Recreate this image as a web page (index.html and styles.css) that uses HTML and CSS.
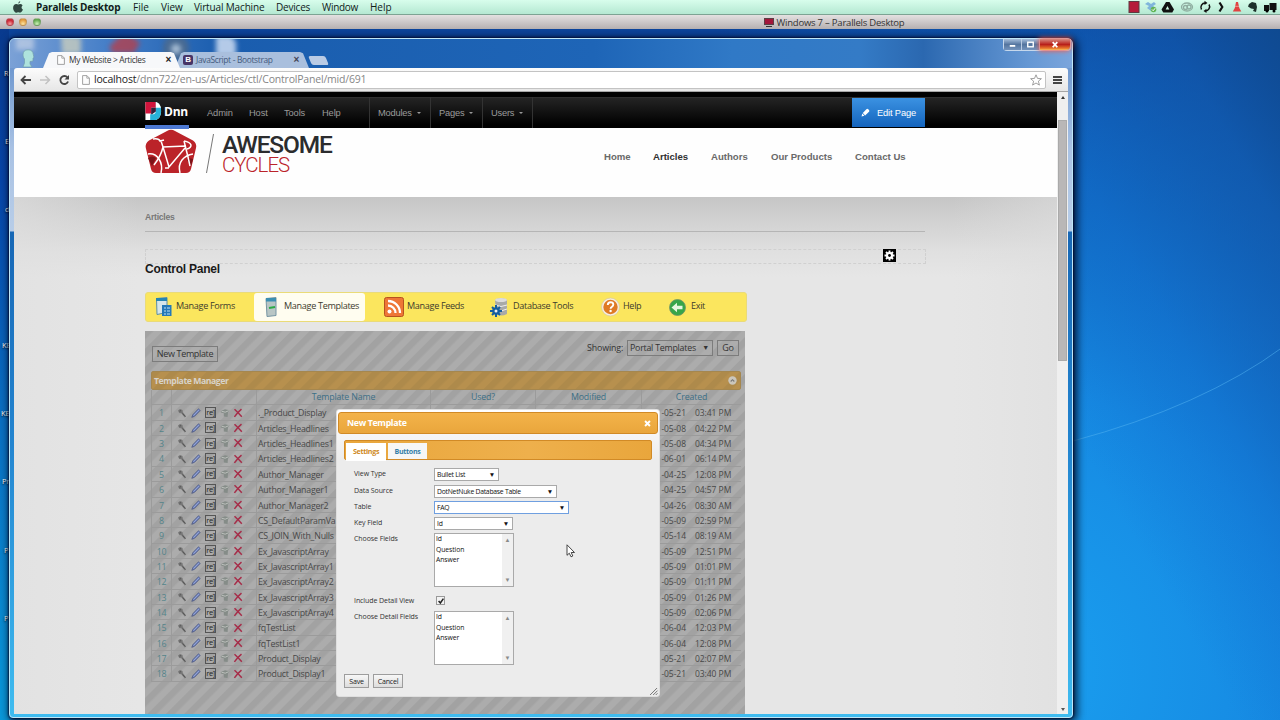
FILE: index.html
```html
<!DOCTYPE html>
<html lang="en">
<head>
<meta charset="utf-8">
<title>Control Panel</title>
<link rel="stylesheet" href="styles.css">
</head>
<body>
<svg class="defs" aria-hidden="true">
  <symbol id="wrench" viewBox="0 0 10 10"><path d="M1 2.500L3 1l2.500 1 .3 2L9 8.200 7.800 9.400 4.300 5.200 2.200 5Z" fill="#777"/><path d="M2.500 3.200l1.500-.6M5.500 5.500l2.800 3" stroke="#555" stroke-width="1"/></symbol>
  <symbol id="pencil" viewBox="0 0 10 10"><path d="M.8 9.300L2 6.500 7.500.8 9.200 2.400 3.500 8.300Z" fill="#7487c0" stroke="#4a5680" stroke-width=".8"/><path d="M2.500 7.500L8.200 1.700" stroke="#93a4d6"/></symbol>
  <symbol id="crate" viewBox="0 0 10 10"><path d="M.8 3L5 1.200 9.500 2.300 8 4.500 7.600 9 3.800 8.600 3.800 5.200.8 4.500Z" fill="#858c88"/><path d="M1.500 3.200l3.700 1 3.500-1.500" stroke="#bcc0bc" fill="none"/></symbol>
  <symbol id="cross" viewBox="0 0 10 10"><path d="M1.500 1.300Q5 4.500 8.800 8.700M8.500 1.200Q4.500 4.500 1.400 8.900" stroke="#a62d49" stroke-width="1.500" fill="none"/></symbol>
  <symbol id="page" viewBox="0 0 8 10"><path d="M.6.6h4.300l2.500 2.500v6.300H.6Z" fill="#fdfdfd" stroke="#999" stroke-width=".9"/><path d="M4.800.6v2.600h2.600" fill="none" stroke="#999" stroke-width=".8"/></symbol>
</svg>

<header class="menubar">
  <svg class="apple" viewBox="0 0 12 12"><path d="M8.300 0Q6.200.6 6.200 2.700 8.200 2.400 8.300 0Z" fill="#344b45"/><path d="M6.200 3.400Q3.800 2.300 2 3.900 0 7 2.400 10.500 3.700 12.200 5 11.500 6.300 10.900 7.600 11.600 9.200 12 11 8.700 8.300 6.900 10.600 4.200 9 2.300 6.200 3.400Z" fill="#304740"/></svg>
  <b class="m1">Parallels Desktop</b><span class="m2">File</span><span class="m3">View</span><span class="m4">Virtual Machine</span><span class="m5">Devices</span><span class="m6">Window</span><span class="m7">Help</span>
  <svg class="tray" viewBox="0 0 152 14">
    <rect x="1" y="1.500" width="10" height="11" fill="#b51d3b" stroke="#5e3a42"/>
    <path d="M17 4l3-2 3 2 3-2 2 2-3 2 2 2-4 3-4-3 2-2Z" fill="#7fb5dc"/><circle cx="25.500" cy="9.500" r="2.800" fill="#62b558"/><path d="M24 9.500l1.200 1.200 2-2.500" stroke="#fff" fill="none"/>
    <path d="M38 2h3.500l4.500 7.500-1.700 3h-9L33.500 9.500Z" fill="#111"/><path d="M39.500 6l1.800 3.500h-3.600Z" fill="#cff7e2"/>
    <g fill="none" stroke="#8fada0" stroke-width="1.300"><ellipse cx="59" cy="7" rx="5.500" ry="4"/><circle cx="57.500" cy="7.500" r="2"/><circle cx="61" cy="7" r="2"/></g>
    <path d="M73.500 9.500a4.300 4.300 0 0 1 4-6.500M81 4.500a4.300 4.300 0 0 1-4 6.500" fill="none" stroke="#111" stroke-width="1.500"/><path d="M76.500.8l3 2.300-3 2ZM78.500 8.800v4.200l-3-2Z" fill="#111"/>
    <path d="M91.500 2.500l2.800 4.500-2.800 4.500" fill="none" stroke="#111" stroke-width="2.200"/>
    <path d="M108 2h2l1.300 6 2 3.500h-8.500l2-3.500Z" fill="#e04342"/><path d="M107 6.300h4" stroke="#ef9b93"/>
    <path d="M121 4l3-2 4 1 1 4-1 5-3-1 1-2-3-.5-3-2Z" fill="#1d302b"/>
    <path d="M136 5h5v6h-5ZM141.500 3h7v7h-7Z" fill="#111"/><circle cx="139" cy="11" r="1.500"/><circle cx="146" cy="11" r="1.500"/>
  </svg>
</header>

<div class="vmbar">
  <i class="light red"></i><i class="light amber"></i><i class="light green"></i>
  <svg class="vmicon" viewBox="0 0 10 9"><rect x=".5" y=".5" width="9" height="6" fill="#a2163a" stroke="#5b4046"/><path d="M2 8.500h6" stroke="#333"/></svg>
  <span>Windows 7 – Parallels Desktop</span>
</div>

<main class="desktop">
  <svg class="arc" viewBox="0 0 210 110"><path d="M0 94Q130 59 210 0" fill="none" stroke="#56b5f2" stroke-width="1" opacity=".5"/></svg>
  <span class="lbl" style="top:39px;left:4px">R</span><span class="lbl" style="top:107px;left:5px">E</span><span class="lbl" style="top:175px;left:5px">d</span><span class="lbl" style="top:311px;left:2px">KE</span><span class="lbl" style="top:379px;left:1px">KB</span><span class="lbl" style="top:447px;left:2px">Pr</span><span class="lbl" style="top:516px;left:4px">P</span><span class="lbl" style="top:584px;left:4px">P</span>

  <section class="window">
    <div class="glass">
      <svg class="blobs" viewBox="0 0 340 30"><g><rect x="6" y="-2" width="18" height="13" fill="#d3dcea" opacity=".7"/><path d="M51-4l20 2v17H52Z" fill="#ddd9bb" opacity=".8"/><path d="M115-8l15 12-6 10h-21l-4-6Z" fill="#c13a3f" opacity=".85"/><circle cx="166" cy="9" r="13" fill="#4d6a8c"/><circle cx="166" cy="10" r="5" fill="#bccbd9"/><path d="M206-3h15l5 6v14h-20Z" fill="#cfdef3"/></g></svg>
      <svg class="head" viewBox="0 0 14 18"><path d="M2 6Q2 .8 7 .8 12 .8 12.300 5.500L13 8.500 12 9v3L9 12.500V15l2 3H2l1.500-4V10Q2 8.500 2 6Z" fill="#aee2dd" stroke="#719cae" stroke-width=".7"/></svg>
      <div class="tab on"><svg class="ic"><use href="#page"/></svg><span>My Website &gt; Articles</span><em>×</em></div>
      <div class="tab off"><i class="bs">B</i><span>JavaScript - Bootstrap</span><em>×</em></div>
      <i class="newtab"></i>
      <div class="winbtns">
        <span><svg viewBox="0 0 18 12"><path d="M6 7.500h6" stroke="#fff" stroke-width="2"/></svg></span><span><svg viewBox="0 0 18 12"><rect x="6" y="3.500" width="6" height="5" fill="none" stroke="#fff" stroke-width="1.500"/></svg></span><span class="close"><svg viewBox="0 0 30 12"><path d="M12.500 3.500l5 5.500M17.500 3.500l-5 5.500" stroke="#fff" stroke-width="2"/></svg></span>
      </div>
    </div>
    <div class="toolbar">
      <svg class="nav" viewBox="0 0 60 22"><path d="M7.500 11H17M11.500 7l-4 4 4 4" fill="none" stroke="#444" stroke-width="1.800"/><path d="M26 11h9.500M31.500 7l4 4-4 4" fill="none" stroke="#c2c2c2" stroke-width="1.500"/><path d="M53.500 8.500a4 4 0 1 0 .6 4" fill="none" stroke="#444" stroke-width="1.800"/><path d="M55 6v4.500h-4.500Z" fill="#444"/></svg>
      <div class="omni"><svg class="ic"><use href="#page"/></svg><span class="url"><b>localhost</b>/dnn722/en-us/Articles/ctl/ControlPanel/mid/691</span><svg class="star" viewBox="0 0 12 12"><path d="M6 .8l1.500 3.600 3.900.3-3 2.500 1 3.900L6 9l-3.400 2.100 1-3.900-3-2.500 3.900-.3Z" fill="#fff" stroke="#888" stroke-width=".8"/></svg></div>
      <i class="burger"></i>
    </div>
    <div class="viewport">
      <div class="page">
        <div class="dnnbar">
          <svg class="dnn" viewBox="0 0 17 20"><path d="M0 0h11q5.500 2 5.500 9.500Q16.500 17 11 19H0Z" fill="#fff"/><path d="M0 0h11v6H6v6H0Z" fill="#d2143c"/><path d="M11 6V0q5.500 2 5.500 9.500Q16.500 17 11 19H5v-6h4q2-1 2-4Z" fill="#27b3d8"/><path d="M11 0q4 1 5.300 6H11Z" fill="#fff"/><path d="M6 6h5v4l-4 3H6Z" fill="#33203a"/></svg>
          <b class="dnntext">Dnn</b>
          <span class="a1">Admin</span><span class="a2">Host</span><span class="a3">Tools</span><span class="a4">Help</span>
          <span class="drop d1">Modules<i></i></span><span class="drop d2">Pages<i></i></span><span class="drop d3">Users<i></i></span><i class="dropend"></i>
          <div class="edit"><svg viewBox="0 0 10 10"><path d="M.6 9.400L1.400 6.200 3.800 8.600ZM2 5.500L6 1.300q1-.8 2 0l.9.9q.8 1 0 2L4.600 8.200Z" fill="#fff"/></svg><span>Edit Page</span></div>
        </div>
        <div class="sitehead">
          <svg class="bike" viewBox="0 0 52 46"><path d="M22 2Q26-.5 30 2L48 11.500Q52 14 51 19L46 40Q45 44 41 44H11Q7 44 6 40L.8 19Q0 14 4 11.500Z" fill="#bb2329"/><path d="M3 29q4-3 8 0l-4 8M48 30q-5-2-6 1l4 6" fill="#7d1319"/><g fill="none" stroke="#fff" stroke-width="1.500"><path d="M3 25q7-1 11 5 4 6 2 14M35 44q-2-8 2-13 4-5 11-6"/><path d="M8 10q6-1 7 2l4-1M16 12l2 6 23-1M18 18q-2 9-9 18M18 18l6 20 16-19M24 39h-4M39 12q6 1 7 4 0 3-4 4M39 12l4 16 2 9"/></g></svg>
          <svg class="slash" viewBox="0 0 10 40"><path d="M7.500 0L.5 39" stroke="#777" stroke-width="1"/></svg>
          <div class="brand"><b>AWESOME</b><span>CYCLES</span></div>
          <nav><span class="n1">Home</span><span class="n2">Articles</span><span class="n3">Authors</span><span class="n4">Our Products</span><span class="n5">Contact Us</span></nav>
        </div>
        <div class="content">
          <div class="crumb">Articles</div>
          <div class="dash"><i class="gear"><svg viewBox="0 0 13 13"><path d="M6.500 1.500v10M1.500 6.500h10M3 3l7 7M10 3L3 10" stroke="#fff" stroke-width="1.900"/><circle cx="6.500" cy="6.500" r="3.500" fill="#fff"/><circle cx="6.500" cy="6.500" r="1.400" fill="#000"/></svg></i></div>
          <h1>Control Panel</h1>
          <div class="yellow">
            <div class="y1"><svg viewBox="0 0 16 20"><path d="M.5 1.500L11 .5v15L1 17.500Z" fill="#d6e6ea" stroke="#5a8da5"/><path d="M0 1h11v3H0Z" fill="#2685b4"/><rect x="6" y="8" width="9.500" height="11" fill="#2479b8"/><path d="M8 11h2m1 0h3M8 14h2m1 0h3M8 17h2m1 0h3" stroke="#bde0f5"/></svg><span>Manage Forms</span></div>
            <div class="y2"><svg viewBox="0 0 16 20"><path d="M3 1.500L13 .5v18L4 19.500Z" fill="#b9c6c5" stroke="#7695a3"/><path d="M3 1h10v3.500H3Z" fill="#3b8fb2"/><path d="M6 11l6-1" stroke="#2bab45" stroke-width="2"/></svg><span>Manage Templates</span></div>
            <div class="y3"><svg viewBox="0 0 20 20"><rect x=".5" y=".5" width="19" height="19" rx="2" fill="#ee7636" stroke="#b65220"/><circle cx="5.500" cy="14.500" r="2" fill="#fff"/><path d="M4 8.500a7.500 7.500 0 0 1 7.500 7.500M4 4a12 12 0 0 1 12 12" fill="none" stroke="#fff" stroke-width="2.300"/></svg><span>Manage Feeds</span></div>
            <div class="y4"><svg viewBox="0 0 18 20"><path d="M5 3q6-4 12 0v14q-6 3-11 0Z" fill="#a9aaa8"/><ellipse cx="11" cy="3" rx="6" ry="2" fill="#ddd"/><path d="M5 8q6 3 12 0M6 13q6 2 11-1" stroke="#eee" fill="none"/><path d="M6 8v12M0 14h12M2 10l8 8M10 10l-8 8" stroke="#155ea0" stroke-width="2"/><circle cx="6" cy="14" r="3.800" fill="#155ea0"/><circle cx="6" cy="14" r="1.500" fill="#eee"/></svg><span>Database Tools</span></div>
            <div class="y5"><svg viewBox="0 0 19 20"><circle cx="9.500" cy="10" r="9" fill="#f5eee0" stroke="#d9c8a0" stroke-width=".7"/><circle cx="9.500" cy="10" r="7.200" fill="#df7a25"/><path d="M6.800 8q0-2.800 2.800-2.800 2.700 0 2.700 2.400 0 1.400-1.500 2.200-1.200.6-1.200 2" fill="none" stroke="#fff" stroke-width="1.900"/><circle cx="9.600" cy="14" r="1.200" fill="#fff"/></svg><span>Help</span></div>
            <div class="y6"><svg viewBox="0 0 17 20"><circle cx="8.500" cy="10.500" r="8" fill="#37a649" stroke="#6f9268" stroke-width=".8"/><path d="M2.500 10.500l5.500-4.800v3h5.500v3.600H8v3Z" fill="#e6f7df"/></svg><span>Exit</span></div>
          </div>
          <div class="panel">
            <div class="ptop"><span class="btn nt">New Template</span><span class="show">Showing:</span><span class="btn sel">Portal Templates<i>▼</i></span><span class="btn go">Go</span></div>
            <div class="tmbar"><b>Template Manager</b><svg viewBox="0 0 9 9"><circle cx="4.500" cy="4.500" r="4.200" fill="#cbc6bc"/><path d="M2.700 5.500l1.800-1.800 1.800 1.800" fill="none" stroke="#777" stroke-width="1.100"/></svg></div>
            <div class="grid hd"><span></span><span></span><span>Template Name</span><span>Used?</span><span>Modified</span><span>Created</span></div>
            <div id="rows"></div>

            <div class="dialog">
              <div class="dtitle"><b>New Template</b><svg viewBox="0 0 8 8"><path d="M1.200 1.200l5.600 5.600M6.800 1.200L1.200 6.800" stroke="#fff" stroke-width="2.200"/></svg></div>
              <div class="tabs"><b class="t1">Settings</b><b class="t2">Buttons</b></div>
              <div class="form">
                <div class="fr f1"><label>View Type</label><span class="select s1">Bullet List<i>▼</i></span></div>
                <div class="fr f2"><label>Data Source</label><span class="select s2">DotNetNuke Database Table<i>▼</i></span></div>
                <div class="fr f3"><label>Table</label><span class="select s3">FAQ<i>▼</i></span></div>
                <div class="fr f4"><label>Key Field</label><span class="select s4">Id<i>▼</i></span></div>
                <div class="fr f5"><label>Choose Fields</label><div class="list"><p>Id<br>Question<br>Answer</p><div><i>▲</i><i>▼</i></div></div></div>
                <div class="fr f6"><label>Include Detail View</label><i class="check"><svg viewBox="0 0 9 9"><path d="M1.800 4.500l2 2.300 3.400-5" fill="none" stroke="#222" stroke-width="1.700"/></svg></i></div>
                <div class="fr f7"><label>Choose Detail Fields</label><div class="list"><p>Id<br>Question<br>Answer</p><div><i>▲</i><i>▼</i></div></div></div>
              </div>
              <div class="acts"><span>Save</span><span>Cancel</span></div>
              <svg class="grip" viewBox="0 0 9 8"><path d="M0 8L8 0M3.500 8L8.500 3M6.500 8l2-2" stroke="#555" stroke-width=".9"/></svg>
            </div>
          </div>
        </div>
      </div>
      <div class="scroll"><i class="up"></i><i class="thumb"></i><i class="down"></i></div>
    </div>
  </section>
  <svg class="cursor" viewBox="0 0 10 14"><path d="M1 .8v10.500l2.300-2.100L5 12.800l1.800-.8-1.600-3.500h3.300Z" fill="#fff" stroke="#333" stroke-width=".9"/></svg>
</main>
<script src="rows.js"></script>
</body>
</html>
```
FILE: rows.js
```js
const templates = [
  ["._Product_Display", "05-21", "03:41 PM"],
  ["Articles_Headlines", "05-08", "04:22 PM"],
  ["Articles_Headlines1", "05-08", "04:34 PM"],
  ["Articles_Headlines2", "06-01", "06:14 PM"],
  ["Author_Manager", "04-25", "12:08 PM"],
  ["Author_Manager1", "04-25", "04:57 PM"],
  ["Author_Manager2", "04-26", "08:30 AM"],
  ["CS_DefaultParamVa", "05-09", "02:59 PM"],
  ["CS_JOIN_With_Nulls", "05-14", "08:19 AM"],
  ["Ex_JavascriptArray", "05-09", "12:51 PM"],
  ["Ex_JavascriptArray1", "05-09", "01:01 PM"],
  ["Ex_JavascriptArray2", "05-09", "01:11 PM"],
  ["Ex_JavascriptArray3", "05-09", "01:26 PM"],
  ["Ex_JavascriptArray4", "05-09", "02:06 PM"],
  ["fqTestList", "06-04", "12:03 PM"],
  ["fqTestList1", "06-04", "12:08 PM"],
  ["Product_Display", "05-21", "02:07 PM"],
  ["Product_Display1", "05-21", "03:40 PM"]
];
const icon = name => `<svg class="${name}"><use href="#${name}"/></svg>`;
document.getElementById("rows").innerHTML = templates.map(([name, date, time], i) =>
  `<div class="grid row"><span class="num">${i + 1}</span>` +
  `<span class="tools">${icon("wrench")}${icon("pencil")}<i class="re">re]</i>${icon("crate")}${icon("cross")}</span>` +
  `<span class="name">${name}</span><span class="used">${i ? "" : "0"}</span><span></span>` +
  `<span class="when"><u>-${date}</u><u>${time}</u></span></div>`).join("");
```
FILE: styles.css
```css
* { box-sizing: border-box; }
body { margin: 0; width: 1280px; height: 720px; overflow: hidden; display: flex; flex-direction: column; font-family: "Open Sans", sans-serif; font-size: 9px; color: #222; }
i, u { font-style: normal; text-decoration: none; }
svg { display: block; flex: none; overflow: visible; }
span, b, label { white-space: nowrap; }
.defs { display: none; }

.menubar { height: 15px; flex: none; display: flex; align-items: center; background: linear-gradient(#d8fdec, #b5e8d2); border-bottom: 1px solid #7da393; font-size: 10px; color: #10201a; }
.apple { width: 12px; height: 12px; margin-left: 12px; }
.m1 { margin-left: 12px; width: 97px; letter-spacing: -.15px; }
.m2 { width: 28px; } .m3 { width: 33px; } .m4 { width: 82px; letter-spacing: -.15px; } .m5 { width: 46px; letter-spacing: -.2px; } .m6 { width: 48px; letter-spacing: -.3px; } .m7 { width: 30px; }
.tray { width: 152px; height: 14px; margin-left: auto; }

.vmbar { height: 14px; flex: none; display: flex; align-items: center; background: linear-gradient(#e4e1e1, #b5b0b1); font-size: 9.500px; letter-spacing: -.22px; color: #333; }
.light { width: 8px; height: 8px; border-radius: 50%; margin-left: 5.500px; border: 1px solid #7775; }
.red { background: radial-gradient(circle at 50% 80%, #f5a0a0, #cf2b3a 60%); } .amber { background: radial-gradient(circle at 50% 80%, #fbe3a0, #e39a3b 70%); } .green { background: radial-gradient(circle at 50% 80%, #cdf1b8, #62aa4e 70%); }
.vmicon { width: 10px; height: 9px; margin-left: 723px; margin-right: 3px; }

.desktop { position: relative; flex: 1; overflow: hidden; background: radial-gradient(ellipse 700px 700px at 1010px 640px, #1aa0f0 0, #1689e2 40%, #1168c0 75%, transparent 100%), linear-gradient(#0c449c 0, #0c50a8 20%, #0d66c4 48%, #0c90dc 100%); }
.desktop::before { content: ""; position: absolute; left: 1050px; right: 0; top: 0; bottom: 0; background: linear-gradient(240deg, #0f4a91 0, #1155a8aa 18%, #0f60c255 45%, transparent 70%); }
.desktop::after { content: ""; position: absolute; left: 0; top: 0; width: 9px; height: 691px; background: linear-gradient(#093a8e, #0745a8 22%, #0a6ec2 55%, #0998da 100%); z-index: 0; }
.arc { position: absolute; left: 1073px; top: 318px; width: 210px; height: 110px; }
.lbl { position: absolute; z-index: 1; font-size: 7.500px; color: #fff; line-height: 10px; text-shadow: 0 1px 2px #000; }

.window { position: absolute; z-index: 2; left: 9px; top: 9px; width: 1064px; height: 680px; padding: 0 4px 3px; border: 1px solid #bfe6f7; border-radius: 6px 6px 4px 4px; box-shadow: 0 0 2px 1px #002a, 2px 2px 8px 2px #001c; background: linear-gradient(#6f9bd4 0, #6f98cf 28px, #a9c2e4 110px, #b8cde8 192px, #1767b5 193px, #2385d0 60%, #3fbcf0 100%); display: flex; flex-direction: column; }
.glass { position: relative; height: 29px; flex: none; margin: 0 -4px; padding-left: 11px; display: flex; align-items: flex-end; border-radius: 5px 5px 0 0; background: linear-gradient(90deg, #7ba1d6 0, #467fc8 9%, #1a5dae 20%, #1e65b7 55%, #3079c6 68%, #347bc6 80%, #2b68b0 86%, #6698d4 96%, #7ba5dc); }
.blobs { position: absolute; left: 0; top: 0; width: 340px; height: 30px; filter: blur(2.500px); clip-path: inset(0 0 0 0); opacity: .85; }
.head { position: relative; width: 14px; height: 18px; margin-bottom: 1px; }
.tab { position: relative; display: flex; align-items: center; height: 16px; font-size: 8.400px; color: #333; letter-spacing: -.32px; }
.tab::before { content: ""; position: absolute; inset: 0; background: #f7f8fa; clip-path: polygon(0 100%, 6px 8%, 9px 0, calc(100% - 9px) 0, calc(100% - 6px) 8%, 100% 100%); }
.tab > * { position: relative; }
.tab span { flex: 1; margin-top: -1px; }
.tab em { font: bold 10px/12px "Liberation Sans", sans-serif; margin-right: 9px; color: #222; }
.tab .ic { width: 8px; height: 10px; margin-right: 4px; }
.on { width: 137px; margin-left: 8px; padding-left: 14px; z-index: 1; }
.off { width: 134px; margin-left: -5px; padding-left: 8px; color: #445a7c; }
.off::before { background: #a9bfdd; }
.off em { color: #445; margin-right: 10px; }
.bs { width: 10px; height: 10px; margin-right: 3px; border-radius: 2px; background: #473466; color: #fff; font: bold 8px/10px "Liberation Sans", sans-serif; text-align: center; }
.newtab { position: relative; width: 17px; height: 9px; margin: 0 0 3px 1px; background: #b9cbe5; transform: skewX(22deg); border-radius: 2px; }
.winbtns { position: relative; align-self: flex-start; margin-left: auto; margin-right: 1px; display: flex; height: 12px; border: 1px solid #c6d8ec; border-top: 0; border-radius: 0 0 4px 4px; }
.winbtns span { width: 18px; background: linear-gradient(#a5bedc, #54759f 50%, #7494bd); border-right: 1px solid #b8cbe2; }
.winbtns span svg { width: 100%; height: 11px; }
.winbtns .close { width: 30px; border: 0; border-radius: 0 0 4px 0; background: linear-gradient(#d78b80, #b8201b 50%, #e9782c 85%, #f5c060); box-shadow: 0 0 5px 1px #f75b4a; }

.toolbar { height: 24px; flex: none; display: flex; align-items: center; padding-right: 6px; background: linear-gradient(#fcfcfc, #e6e6e6); border-radius: 3px 3px 0 0; border-bottom: 1px solid #a5a5a5; }
.nav { width: 60px; height: 22px; }
.omni { height: 18px; width: 969px; margin-left: 3px; display: flex; align-items: center; padding: 0 3px 0 4px; background: #fff; border: 1px solid #c3c3c3; border-radius: 2px; }
.omni .ic { width: 8px; height: 10px; margin-right: 4px; }
.url { flex: 1; font-size: 10.500px; color: #868686; letter-spacing: -.19px; margin-top: -1px; }
.url b { font-weight: 400; color: #222; }
.star { width: 12px; height: 12px; }
.burger { width: 9px; height: 8px; margin-left: auto; border-top: 2px solid #444; border-bottom: 2px solid #444; background: linear-gradient(transparent 1px, #444 1px, #444 3px, transparent 3px); }

.viewport { flex: 1; display: flex; min-height: 0; }
.page { width: 1043px; display: flex; flex-direction: column; overflow: hidden; }
.dnnbar { height: 36px; flex: none; padding: 5px 0 0 131px; display: flex; align-items: center; background: linear-gradient(#000 5px, #3a3a3a 5px, #242424 6px, #000 33px); font-family: "Liberation Sans", sans-serif; font-size: 9.300px; color: #9b9b9b; }
.dnn { width: 17px; height: 19px; margin-top: -3px; }
.dnntext { width: 45px; margin: -2px 0 0 2px; font: bold 12px/12px "Open Sans", sans-serif; color: #fff; letter-spacing: -.2px; }
.dnnbar::after { content: ""; position: absolute; left: 135px; top: 86px; width: 44px; height: 4px; background: #4c78d2; }
.a1 { width: 42px; margin-left: -2px; } .a2 { width: 35px; } .a3 { width: 38px; } .a4 { width: 47px; }
.a1, .a2, .a3, .a4 { letter-spacing: -.12px; }
.drop { align-self: stretch; display: flex; align-items: center; padding-left: 8px; border-left: 1px solid #333; letter-spacing: -.2px; }
.drop i { margin-left: 5px; border: 2.500px solid transparent; border-top-color: #999; margin-top: 3px; }
.d1 { width: 61px; } .d2 { width: 52px; } .d3 { width: 50px; } .dropend { width: 1px; align-self: stretch; background: #333; }
.edit { width: 73px; height: 29px; margin-left: 319px; display: flex; align-items: center; padding-left: 9px; gap: 7px; background: linear-gradient(#3b92e2, #1464bd); color: #fff; font-size: 9.300px; letter-spacing: -.15px; }
.edit svg { width: 9px; height: 9px; }

.sitehead { height: 69px; flex: none; display: flex; align-items: flex-start; padding-left: 131px; background: #fefefe; }
.bike { width: 52px; height: 46px; margin-top: 1px; }
.slash { width: 10px; height: 40px; margin: 6px 0 0 9px; }
.brand { margin: 2px 0 0 6px; width: 112px; display: flex; flex-direction: column; font-family: Roboto, sans-serif; }
.brand b { font-size: 24.500px; line-height: 29px; letter-spacing: -1.200px; color: #2b2c2e; font-weight: 500; }
.brand span { font-size: 20.500px; line-height: 24px; margin-top: -7px; letter-spacing: -1px; color: #bb2329; font-weight: 300; margin-top: -6px; }
nav { display: flex; margin: 22px 0 0 270px; font: bold 9.600px/14px "Liberation Sans", sans-serif; color: #696969; }
.n1 { width: 49px; } .n2 { width: 58px; color: #303030; } .n3 { width: 60px; } .n4 { width: 84px; }

.content { position: relative; flex: 1; min-height: 0; padding: 13px 0 0 131px; background: linear-gradient(90deg, #e0e0e0a0, transparent 12%, transparent 90%, #dedede90), linear-gradient(#c6c6c6, #d2d2d2 25px, #e0e0e0 55px, #e6e6e6 80px, #e6e6e6); }
.crumb { width: 780px; height: 22px; border-bottom: 1px solid #b5b5b5; font: bold 8.600px/14px "Liberation Sans", sans-serif; letter-spacing: -.25px; color: #777; }
.dash { width: 781px; height: 15px; margin-top: 17px; border: 1px dashed #d0d0d0; padding-left: 737px; }
.gear { display: block; width: 13px; height: 13px; margin-top: -1px; background: #000; }
h1 { margin: -2px 0 0; font: bold 12px/15px "Liberation Sans", sans-serif; letter-spacing: -.25px; color: #1a1a1a; }
.yellow { width: 602px; height: 30px; margin-top: 15px; display: flex; border: 1px solid #eadb78; border-radius: 3px; background: #fbe65e; font-size: 9.100px; letter-spacing: -.33px; color: #3c3a2c; }
.yellow div { display: flex; align-items: center; }
.yellow span { margin-top: -4px; }
.yellow svg { height: 20px; margin-top: -1px; }
.y1 { width: 108px; padding-left: 10px; gap: 4px; } .y2 { width: 111px; padding-left: 9px; gap: 5px; background: #fffdf0; border-radius: 3px; } .y3 { width: 124px; padding-left: 19px; gap: 3px; } .y4 { width: 112px; padding-left: 1px; gap: 5px; } .y5 { width: 68px; gap: 3px; } .y6 { gap: 5px; }
.y1 svg, .y2 svg { width: 16px; } .y3 svg { width: 20px; } .y4 svg { width: 18px; } .y5 svg { width: 19px; } .y6 svg { width: 17px; }

.panel { position: relative; width: 600px; height: 384px; margin-top: 9px; padding: 0 4px 0 6px; background: repeating-linear-gradient(135deg, #a2a2a2 0 5px, #acacac 7px 12px, #a2a2a2 13px); }
.ptop { height: 40px; display: flex; align-items: flex-start; padding-left: 1px; color: #333; font-size: 9px; letter-spacing: -.35px; }
.btn { border: 1px solid #7c7c7c; height: 16px; line-height: 14px; text-align: center; background: #b0b0b055; }
.nt { width: 66px; margin-top: 15px; }
.show { width: 40px; margin: 10px 0 0 369px; line-height: 14px; font-size: 8.800px; letter-spacing: -.1px; }
.sel { width: 86px; margin-top: 9px; font-size: 8.800px; letter-spacing: -.22px; display: flex; justify-content: space-between; padding: 0 3px 0 2px; }
.sel i { font-size: 7px; }
.go { width: 22px; margin: 9px 0 0 4px; }
.tmbar { height: 19px; display: flex; align-items: center; justify-content: space-between; padding: 0 3px 0 2px; background: repeating-linear-gradient(135deg, #ae8a4b 0 5px, #b7904e 7px 12px, #ae8a4b 13px); border: 1px solid #a5874f; border-radius: 2px; color: #d8d3c9; font-size: 8.700px; letter-spacing: -.45px; }
.tmbar svg { width: 9px; height: 9px; }
.grid { display: grid; grid-template-columns: 20px 85px 174px 105px 106px 100px; height: 15.370px; border-bottom: 1px solid #9b9b9b; }
.grid > span { border-left: 1px solid #9b9b9b; overflow: hidden; line-height: 16px; }
.hd { color: #3c6f86; font-size: 8.800px; letter-spacing: -.15px; text-align: center; }
.hd > span { line-height: 15px; }
.row { font-size: 8.800px; letter-spacing: -.22px; color: #484848; }
.num { text-align: center; color: #54848a; }
.tools { display: flex; align-items: center; padding-left: 5px; gap: 4px; }
.tools svg { width: 10px; height: 10px; }
.tools .cross { margin-left: -1px; }
.re { width: 11px; height: 11px; flex: none; border: 1px solid #555; font-size: 7.500px; line-height: 8px; letter-spacing: -.4px; color: #222; text-align: center; }
.name { padding-left: 1px; } .used { text-align: center; }
.when { display: flex; justify-content: flex-end; gap: 9px; padding-right: 9px; font-size: 8.500px; letter-spacing: -.05px; }
.when u:last-child { width: 37px; }

.dialog { position: absolute; left: 191px; top: 78px; width: 324px; height: 288px; padding: 1px; background: linear-gradient(#fff, #ececec 50px); border: 1px solid #dfdfdf; border-radius: 3px; color: #333; }
.dtitle { height: 22px; margin-top: 1px; display: flex; align-items: center; justify-content: space-between; padding: 0 6px 0 8px; background: linear-gradient(#f3b34a, #e9a63c); border: 1px solid #d18a26; border-radius: 3px; color: #fff; font-size: 8.800px; letter-spacing: -.35px; }
.dtitle svg { width: 7px; height: 7px; }
.tabs { height: 20px; margin: 6px 6px 0 6px; padding: 2px 0 0 1px; display: flex; gap: 2px; background: linear-gradient(90deg, #e9a63c, #eeb04c 60%, #e9a63c); border: 1px solid #d18a26; border-radius: 2px; font-size: 7.100px; line-height: 16px; letter-spacing: -.3px; text-align: center; }
.t1 { width: 40px; background: #fff; color: #cf8a1e; height: 18px; } .t2 { width: 39px; background: #f6f6f6; color: #357fa8; }
.form { padding: 8px 0 0 16px; font-size: 7px; letter-spacing: -.08px; }
.fr { display: flex; align-items: flex-start; }
.fr label { width: 80px; line-height: 13px; margin-top: -1px; }
.select { height: 13px; border: 1px solid #a9a9a9; background: #fff; display: flex; justify-content: space-between; padding: 0 3px 0 2px; line-height: 12px; font-size: 6.800px; letter-spacing: -.25px; color: #111; }
.select i { font-size: 6.500px; }
.f1 { height: 17px; } .f2 { height: 16px; } .f3 { height: 16px; } .f4 { height: 16px; } .f5 { height: 62px; } .f6 { height: 16px; }
.s1 { width: 65px; } .s2 { width: 123px; } .s3 { width: 135px; border-color: #6f9fe0; } .s4 { width: 79px; }
.list { width: 80px; height: 54px; border: 1px solid #a9a9a9; background: #fff; display: flex; color: #111; }
.list p { margin: 0 0 0 1px; flex: 1; line-height: 10.700px; font-size: 6.800px; }
.list div { width: 11px; background: #f0f0f0; display: flex; flex-direction: column; justify-content: space-between; align-items: center; padding: 2px 0; font-size: 6px; line-height: 8px; color: #8a8a8a; }
.check { width: 9px; height: 9px; margin: 1px 0 0 2px; border: 1px solid #999; background: #f3f3f3; }
.check svg { width: 8px; height: 8px; }
.acts { display: flex; gap: 4px; margin: 9px 0 0 6px; font-size: 7.100px; letter-spacing: -.2px; color: #222; text-align: center; }
.acts span { width: 25px; height: 14px; line-height: 12px; border: 1px solid #9d9d9d; background: linear-gradient(#f7f7f7, #ddd); }
.acts span:last-child { width: 30px; }
.grip { position: absolute; right: 1px; bottom: 1px; width: 8px; height: 7px; }

.scroll { width: 11px; background: #efefef; display: flex; flex-direction: column; align-items: center; padding: 4px 0 3px; }
.up { border: 2px solid transparent; border-bottom: 3px solid #333; border-top: 0; }
.thumb { width: 9px; height: 241px; margin-top: 21px; background: #b9b7b7; border: 1px solid #aaa; }
.down { margin-top: auto; border: 2px solid transparent; border-top: 3px solid #555; border-bottom: 0; }
.cursor { position: absolute; z-index: 5; left: 566px; top: 515px; width: 10px; height: 14px; }
```
